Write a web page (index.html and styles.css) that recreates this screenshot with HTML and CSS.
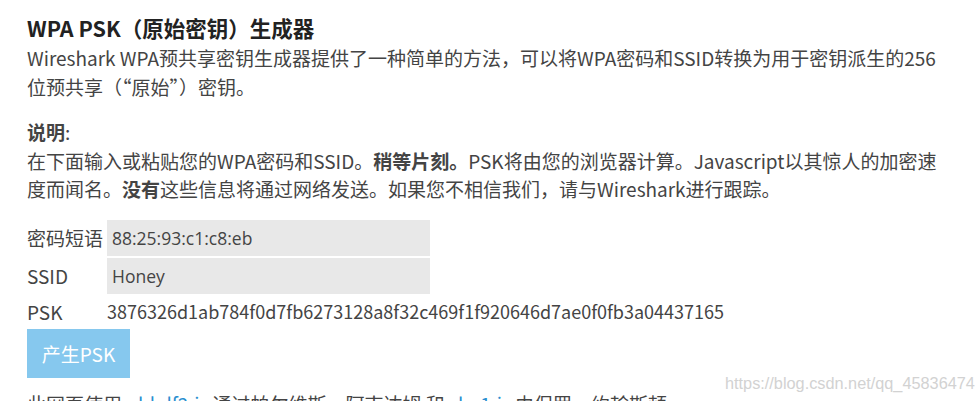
FILE: index.html
```html
<!DOCTYPE html>
<html lang="zh-CN">
<head>
<meta charset="utf-8">
<title>WPA PSK（原始密钥）生成器</title>
<link rel="stylesheet" href="styles.css">
</head>
<body>
<div class="page">
  <h2 class="title">WPA PSK（原始密钥）生成器</h2>
  <p class="intro">Wireshark WPA预共享密钥生成器提供了一种简单的方法，可以将WPA密码和SSID转换为用于密钥派生的256位预共享（“原始”）密钥。</p>
  <p class="note"><strong>说明</strong>:<br>在下面输入或粘贴您的WPA密码和SSID。<strong>稍等片刻。</strong>PSK将由您的浏览器计算。Javascript以其惊人的加密速度而闻名。<strong>没有</strong>这些信息将通过网络发送。如果您不相信我们，请与Wireshark进行跟踪。</p>
  <table class="form">
    <tr>
      <td class="label">密码短语</td>
      <td><input class="field" type="text" value="88:25:93:c1:c8:eb"></td>
    </tr>
    <tr>
      <td class="label">SSID</td>
      <td><input class="field" type="text" value="Honey"></td>
    </tr>
    <tr class="psk-row">
      <td class="label">PSK</td>
      <td class="psk">3876326d1ab784f0d7fb6273128a8f32c469f1f920646d7ae0f0fb3a04437165</td>
    </tr>
  </table>
  <button class="generate" type="button">产生PSK</button>
  <p class="credits">此网页使用 <a href="#">pbkdf2.js</a> 通过帕尔维斯·阿南达姆 和 <a href="#">sha1.js</a> 由保罗·约翰斯顿。</p>
</div>
<div class="watermark">https://blog.csdn.net/qq_45836474</div>
</body>
</html>
```
FILE: styles.css
```css
html, body {
  margin: 0;
  padding: 0;
  background: #fff;
  overflow: hidden;
}
body {
  font-family: "Noto Sans CJK SC", "Noto Sans", sans-serif;
  color: #444;
  font-size: 19px;
}
.page {
  padding: 13px 0 0 27px;
}
.title {
  margin: 0;
  font-size: 21.5px;
  line-height: 30px;
  font-weight: bold;
  color: #222;
}
.intro {
  margin: 0;
  width: 925px;
  line-height: 29px;
}
.note {
  margin: 17px 0 0;
  width: 925px;
  line-height: 28.5px;
}
.note strong {
  color: #444;
}
.form {
  margin-top: 16px;
  border-collapse: separate;
  border-spacing: 0 2px;
  margin-left: 0;
  position: relative;
  top: -2px;
}
.form td {
  padding: 0;
  vertical-align: middle;
}
.label {
  width: 80px;
  line-height: 36px;
}
.field {
  display: block;
  width: 323px;
  height: 36px;
  box-sizing: border-box;
  border: none;
  background: #e8e8e8;
  padding: 0 5px;
  font-family: "Open Sans", "Noto Sans", sans-serif;
  font-size: 17.5px;
  color: #444;
  outline: none;
}
.psk-row td {
  line-height: 31px;
}
.psk {
  white-space: nowrap;
  font-size: 18px;
}
.generate {
  display: block;
  margin-top: -2px;
  width: 103px;
  height: 49px;
  border: none;
  background: #86c8ee;
  color: #fff;
  font-family: "Noto Sans CJK SC", "Noto Sans", sans-serif;
  font-size: 19px;
  padding: 0;
}
.credits {
  margin: 11px 0 0;
  line-height: 29px;
  white-space: nowrap;
}
.credits a {
  color: #2a8fd0;
  text-decoration: none;
}
.watermark {
  position: absolute;
  left: 725px;
  top: 372px;
  font-family: "Liberation Sans", Arial, sans-serif;
  font-size: 16.3px;
  color: #d2d2d2;
  line-height: 22px;
}
```
